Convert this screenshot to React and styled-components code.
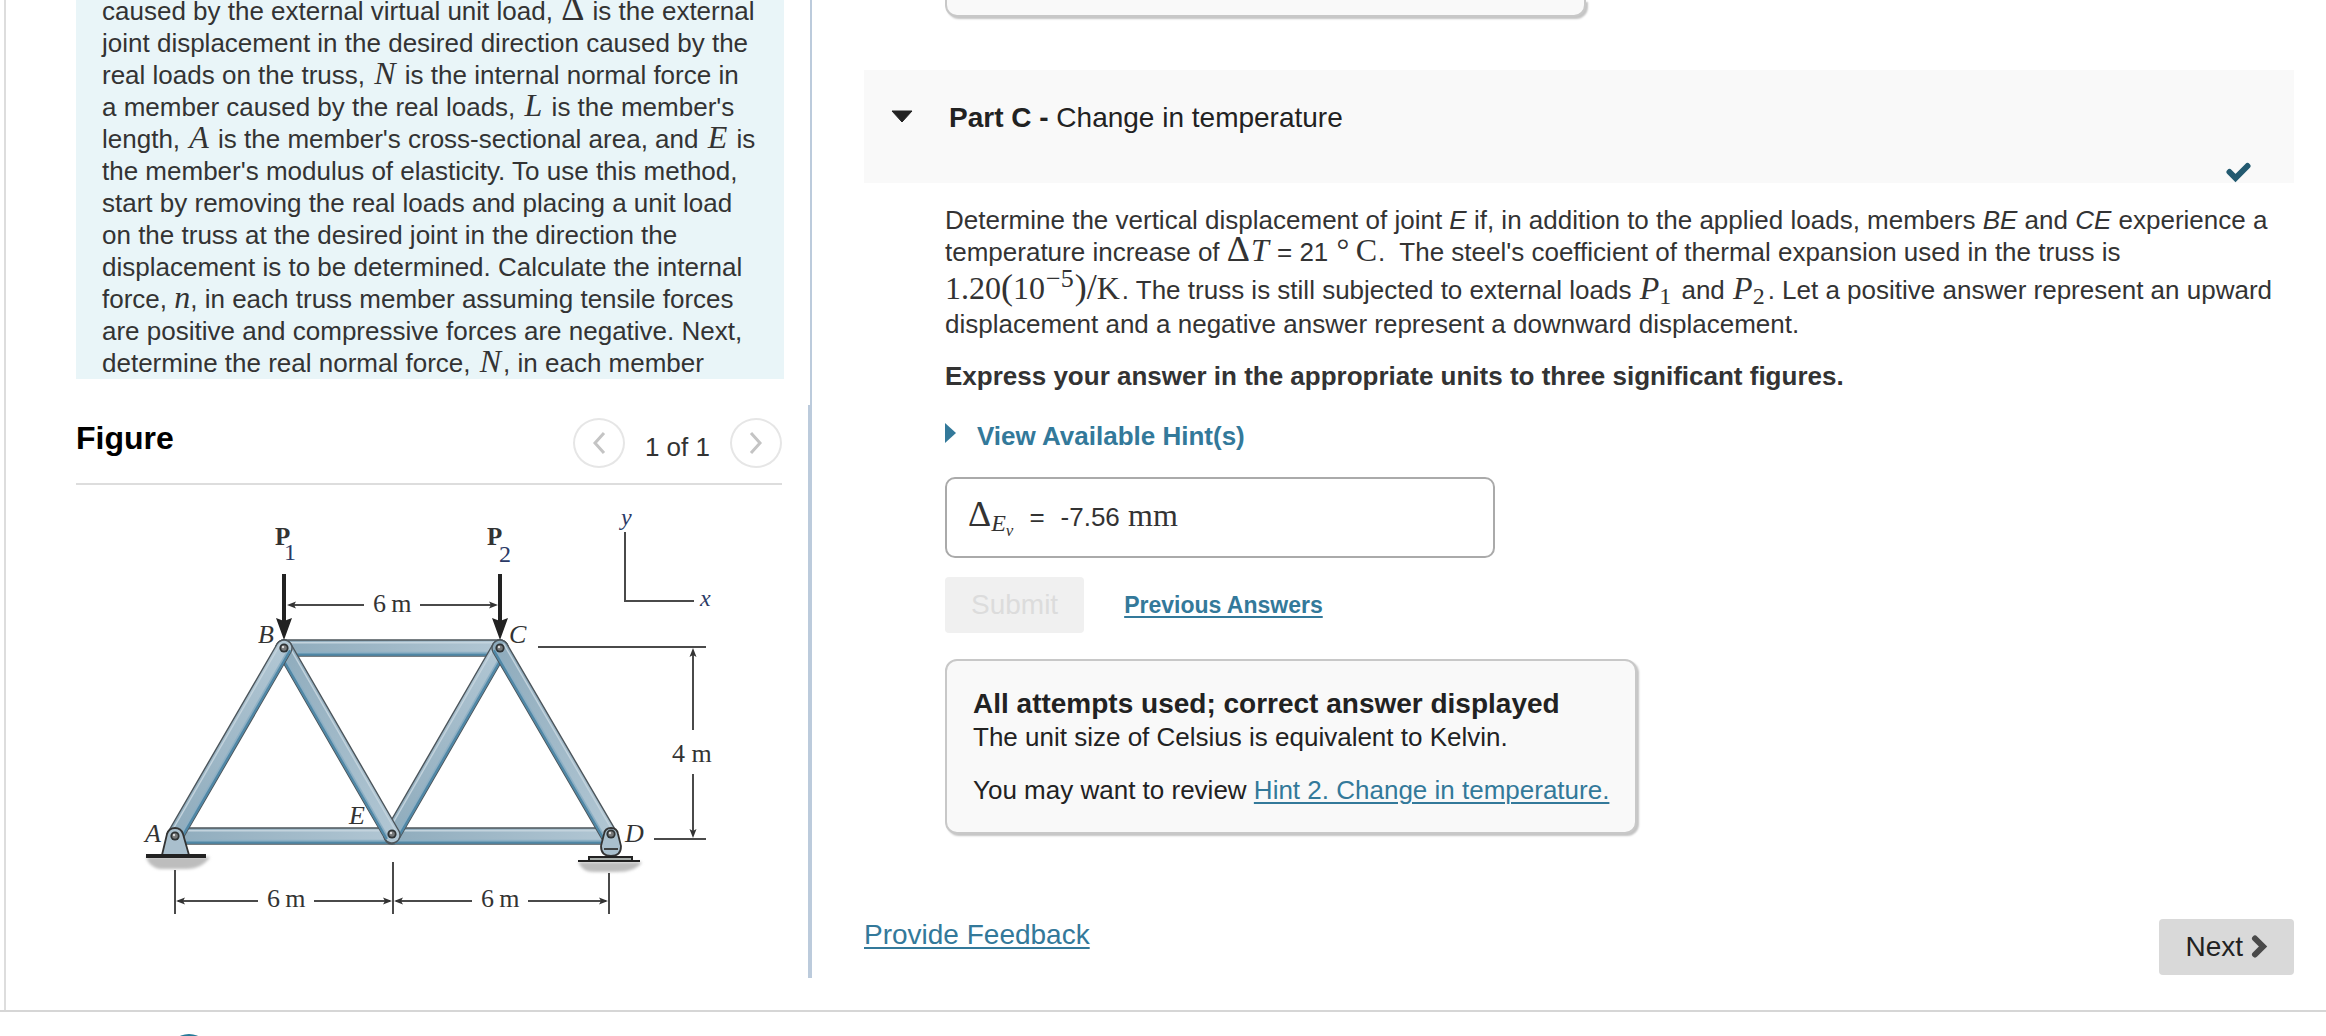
import styled, { createGlobalStyle } from 'styled-components'

const GlobalStyle = createGlobalStyle`
  * {
    box-sizing: border-box;
  }
  body {
    margin: 0;
    background: #fff;
    color: #333;
    font-family: 'Liberation Sans', Arial, sans-serif;
    font-size: 26px;
    line-height: 32px;
  }
  h2, h3, p {
    margin: 0;
  }
  button {
    font-family: inherit;
  }
`

const Shell = styled.div`
  display: flex;
  margin-left: 4px;
  border-left: 2px solid #ddd;
`

const Sidebar = styled.aside`
  flex: 0 1 35%;
  max-width: 806px;
`

const IntroSection = styled.section`
  padding: 0 26px 26px 70px;
  border-right: 2px solid #bccbdc;
`

const IntroPanel = styled.div`
  display: flex;
  flex-direction: column;
  justify-content: flex-end;
  height: 379px;
  padding: 0 24px 0 26px;
  overflow: hidden;
  background: #e9f5f8;
`

const FigureSection = styled.section`
  padding: 13px 26px 0 70px;
  border-right: 4px solid #bccbdc;
`

const FigureHeader = styled.div`
  display: flex;
  justify-content: space-between;
  padding-bottom: 15px;
  border-bottom: 2px solid #ddd;
`

const FigureTitle = styled.h2`
  color: #000;
  font-size: 32px;
  line-height: 40px;
`

const Pager = styled.div`
  display: flex;
  align-items: center;
  gap: 20px;
`

const PageCount = styled.span`
  padding-top: 8px;
`

const PagerButton = styled.button`
  display: flex;
  align-items: center;
  justify-content: center;
  width: 52px;
  height: 50px;
  padding: 0;
  border: 2px solid #e6e6e6;
  border-radius: 50%;
  background: #fff;
`

const Drawing = styled.svg`
  display: block;
  width: 100%;
  height: auto;
`

const Main = styled.main`
  flex: 1;
  min-width: 0;
  padding: 0 32px 35px 52px;
`

const Card = styled.div`
  border: 2px solid #c8c8c8;
  border-radius: 12px;
  background: #f9f9f9;
  box-shadow: 2px 2px 2px #c4c4c4;
  color: #222;
`

const PreviousCard = styled(Card)`
  max-width: 641px;
  height: 17px;
  margin-left: 81px;
  border-top: 0;
  border-radius: 0 0 12px 12px;
`

const PartHeader = styled.header`
  display: flex;
  align-items: flex-start;
  height: 113px;
  margin-top: 53px;
  padding: 32px 43px 0 27px;
  background: #f9f9f9;
`

const Toggle = styled.button`
  display: flex;
  align-items: center;
  height: 30px;
  padding: 0;
  border: 0;
  background: none;
`

const PartTitle = styled.h3`
  flex: 1;
  margin-left: 36px;
  color: #222;
  font-size: 28px;
  font-weight: 400;
`

const CheckMark = styled.svg`
  align-self: flex-end;
`

const PartBody = styled.div`
  padding: 21px 18px 0 81px;
`

const Instruction = styled.p`
  margin-top: 20px;
  font-weight: 700;
`

const HintToggle = styled.button`
  display: flex;
  gap: 20px;
  margin-top: 28px;
  padding: 0;
  border: 0;
  background: none;
  color: #33799a;
  font-size: 26px;
  font-weight: 700;
  line-height: 32px;
`

const Formula = styled.span`
  margin: 0 ${({ $gap }) => $gap || 0}px;
  font-family: 'Liberation Serif', 'Times New Roman', serif;
  font-size: 32px;
  line-height: 28px;
`

const Var = styled(Formula)`
  font-style: italic;
`

const Delta = styled(Formula)`
  font-size: 36px;
  line-height: 24px;
`

const TallFormula = styled(Formula)`
  display: inline-block;
  margin-right: 2px;
  line-height: 40px;
`

const Bracket = styled.span`
  font-size: 36px;
  line-height: 0;
`

const Sup = styled.sup`
  margin: 0 1px;
  font-size: 26px;
  line-height: 0;
  vertical-align: 12px;
`

const Sub = styled.sub`
  margin-right: 2px;
  font-size: 24px;
  font-style: ${({ $italic }) => ($italic ? 'italic' : 'normal')};
  line-height: 0;
  vertical-align: -5px;
`

const SmallSub = styled(Sub)`
  margin-right: 0;
  font-size: 17px;
`

const AnswerBox = styled.div`
  display: flex;
  align-items: baseline;
  max-width: 550px;
  height: 81px;
  margin-top: 25px;
  padding: 22px 20px;
  border: 2px solid #aaa;
  border-radius: 10px;
`

const Equals = styled.span`
  margin: 0 16px 0 13px;
`

const Actions = styled.div`
  display: flex;
  align-items: center;
  gap: 40px;
  margin-top: 19px;
`

const Button = styled.button`
  display: flex;
  align-items: center;
  gap: 8px;
  height: 56px;
  padding: 0 26px;
  border: 0;
  border-radius: 4px;
  background: #d9d9d9;
  color: #222;
  font-size: 28px;
  line-height: 32px;

  &:disabled {
    background: #f0f0f0;
    color: #dcdcdc;
  }
`

const Link = styled.a`
  color: #33799a;
  text-decoration: underline;
  text-decoration-thickness: 2px;
  text-underline-offset: 3px;
`

const AnswersLink = styled(Link)`
  font-size: 23px;
  font-weight: 700;
`

const FeedbackLink = styled(Link)`
  font-size: 28px;
`

const FeedbackCard = styled(Card)`
  max-width: 692px;
  margin-top: 26px;
  padding: 26px 20px 26px 26px;
`

const FeedbackTitle = styled.h3`
  font-size: 28px;
  line-height: 34px;
`

const Review = styled.p`
  margin-top: 21px;
`

const PageActions = styled.div`
  display: flex;
  align-items: flex-start;
  justify-content: space-between;
  margin-top: 85px;
`

const Footer = styled.footer`
  height: 26px;
  padding: 22px 168px 0;
  overflow: hidden;
  border-top: 2px solid #d6d6d6;
`

const Badge = styled.div`
  width: 42px;
  height: 42px;
  border-radius: 50%;
  background: #287a99;
`

// a beam is drawn along its own x axis, then turned into place
const Member = ({ x1, y1, x2, y2 }) => {
  const length = Math.hypot(x2 - x1, y2 - y1)
  const angle = (Math.atan2(y2 - y1, x2 - x1) * 180) / Math.PI
  return (
    <g transform={`translate(${x1} ${y1}) rotate(${angle})`}>
      <rect x="-8" y="-8" width={length + 16} height="16" rx="8" fill="url(#steel)" stroke="#4c555b" strokeWidth="1.4" />
      <path d={`M-2 -5.2H${length + 2}`} stroke="#c3d3dd" strokeWidth="1.4" />
      <path d={`M0 4.6H${length}`} stroke="#8cafc4" strokeWidth="1.6" />
      <path d={`M-1 6.6H${length + 1}`} stroke="#4f87a6" strokeWidth="2.4" />
    </g>
  )
}

const Pin = ({ x, y }) => (
  <g>
    <circle cx={x} cy={y} r="4.6" fill="#2f3335" />
    <circle cx={x} cy={y} r="2.8" fill="#77797a" />
    <circle cx={x - 1} cy={y - 1} r="1.2" fill="#ddd" />
  </g>
)

const Load = ({ x }) => (
  <g fill="#222">
    <rect x={x - 2} y="574" width="4" height="48" />
    <path d={`M${x - 8} 618L${x} 621L${x + 8} 618L${x} 640Z`} />
  </g>
)

const Tip = ({ x, y, turn }) => (
  <path d="M0 0L-9 -3.5L-7 0L-9 3.5Z" fill="#333" transform={`translate(${x} ${y}) rotate(${turn})`} />
)

const Truss = () => (
  <Drawing viewBox="76 485 706 493" role="img" aria-label="Truss">
    <defs>
      <linearGradient id="steel" x1="0" x2="1" y1="0" y2="0">
        <stop offset="0" stopColor="#8eabbc" />
        <stop offset="1" stopColor="#b2c7d4" />
      </linearGradient>
      <filter id="soft" x="-10%" y="-40%" width="120%" height="180%">
        <feGaussianBlur stdDeviation="1.5" />
      </filter>
    </defs>

    <g fill="#bdbdbd" filter="url(#soft)">
      <path d="M146 857H210Q202 869 186 869H160Q149 867 146 857Z" />
      <path d="M578 862H642Q636 872 616 872H594Q582 872 578 862Z" />
    </g>

    <Member x1={284} y1={648} x2={500} y2={648} />
    <Member x1={175} y1={836} x2={392} y2={836} />
    <Member x1={392} y1={836} x2={606} y2={836} />
    <Member x1={392} y1={835} x2={500} y2={648} />
    <Member x1={284} y1={648} x2={392} y2={835} />
    <Member x1={175} y1={836} x2={284} y2={648} />
    <Member x1={500} y1={648} x2={609} y2={835} />

    <g fill="#a9bfcd" stroke="#333" strokeWidth="1.8">
      <path d="M162 855L167 834Q169 828 175 828Q181 828 183 834L189 855Z" />
      <path d="M604 834Q605 828 611 828Q617 828 618 834L621 846Q621 856 611 856Q601 856 601 846Z" />
      <path d="M604 849H618" />
    </g>
    <rect x="146" y="854" width="60" height="4" fill="#222" />
    <rect x="589" y="857" width="43" height="4" fill="#a9afab" stroke="#222" strokeWidth="2" />
    <rect x="578" y="860" width="62" height="2" fill="#222" />
    <Pin x={284} y={648} />
    <Pin x={500} y={648} />
    <Pin x={175} y={836} />
    <Pin x={392} y={834} />
    <Pin x={611} y={834} />
    <Load x={284} />
    <Load x={500} />

    <g stroke="#4a4a4a" strokeWidth="2" fill="none">
      <path d="M290 605H364M420 605H494" />
      <path d="M175 870V914M393 862V914M609 873V914" />
      <path d="M178 901H258M314 901H390M396 901H472M528 901H606" />
      <path d="M538 647H706M654 839H706M693 652V730M693 774V834" />
      <path d="M625 532V601H694" />
    </g>
    <Tip x={287} y={605} turn={180} />
    <Tip x={498} y={605} turn={0} />
    <Tip x={176} y={901} turn={180} />
    <Tip x={392} y={901} turn={0} />
    <Tip x={394} y={901} turn={180} />
    <Tip x={608} y={901} turn={0} />
    <Tip x={693} y={648} turn={-90} />
    <Tip x={693} y={838} turn={90} />

    <g fontFamily="'Liberation Serif', serif" fontSize="26" fill="#333">
      <g fontWeight="700" fontSize="25">
        <text x="275" y="545">P</text>
        <text x="487" y="545">P</text>
      </g>
      <g fill="#2b3a66" fontSize="24">
        <text x="284" y="560">1</text>
        <text x="499" y="562">2</text>
        <text x="621" y="525" fontStyle="italic">y</text>
        <text x="700" y="606" fontStyle="italic">x</text>
      </g>
      <text x="373" y="612">6&#8201;m</text>
      <text x="267" y="907">6&#8201;m</text>
      <text x="481" y="907">6&#8201;m</text>
      <text x="672" y="762">4 m</text>
      <g fontStyle="italic">
        <text x="145" y="842">A</text>
        <text x="258" y="643">B</text>
        <text x="509" y="643">C</text>
        <text x="625" y="842">D</text>
        <text x="349" y="824">E</text>
      </g>
    </g>
  </Drawing>
)

const App = () => {
  return (
    <>
      <GlobalStyle />
      <Shell>
        <Sidebar>
          <IntroSection>
            <IntroPanel>
              <p>
                caused by the external virtual unit load, <Delta $gap={1}>Δ</Delta>{' '}
                is the external joint displacement in the desired direction
                caused by the real loads on the truss, <Var $gap={2}>N</Var> is
                the internal normal force in a member caused by the real loads,{' '}
                <Var $gap={2}>L</Var> is the member's length,{' '}
                <Var $gap={2}>A</Var> is the member's cross-sectional area, and{' '}
                <Var $gap={2}>E</Var> is the member's modulus of elasticity. To
                use this method, start by removing the real loads and placing a
                unit load on the truss at the desired joint in the direction
                the displacement is to be determined. Calculate the internal
                force, <Var>n</Var>, in each truss member assuming tensile
                forces are positive and compressive forces are negative. Next,
                determine the real normal force, <Var $gap={2}>N</Var>, in each
                member
              </p>
            </IntroPanel>
          </IntroSection>
          <FigureSection>
            <FigureHeader>
              <FigureTitle>Figure</FigureTitle>
              <Pager>
                <PagerButton type="button" aria-label="Previous figure">
                  <svg width="14" height="24" viewBox="0 0 14 24" fill="none" stroke="#c4c4c4" strokeWidth="3">
                    <path d="M12 2L3 12L12 22" />
                  </svg>
                </PagerButton>
                <PageCount>1 of 1</PageCount>
                <PagerButton type="button" aria-label="Next figure">
                  <svg width="14" height="24" viewBox="0 0 14 24" fill="none" stroke="#c4c4c4" strokeWidth="3">
                    <path d="M2 2L11 12L2 22" />
                  </svg>
                </PagerButton>
              </Pager>
            </FigureHeader>
            <Truss />
          </FigureSection>
        </Sidebar>

        <Main>
          <PreviousCard />
          <PartHeader>
            <Toggle type="button" aria-label="Collapse Part C">
              <svg width="22" height="14" viewBox="0 0 22 14">
                <path d="M1 1H21L11 12Z" fill="#222" stroke="#222" strokeLinejoin="round" />
              </svg>
            </Toggle>
            <PartTitle>
              <b>Part C -</b> Change in temperature
            </PartTitle>
            <CheckMark width="25" height="21" viewBox="0 0 25 21" fill="none" stroke="#235a70" strokeWidth="6">
              <path d="M3.5 10L9.5 16L21.5 4" strokeLinecap="round" />
            </CheckMark>
          </PartHeader>

          <PartBody>
            <p>
              Determine the vertical displacement of joint <i>E</i> if, in
              addition to the applied loads, members <i>BE</i> and <i>CE</i>{' '}
              experience a temperature increase of <Delta>Δ</Delta>
              <Var $gap={1}>T</Var> = 21 <Formula $gap={1}>°&#8201;C</Formula>.&nbsp;
              The steel's coefficient of thermal expansion used in the truss is{' '}
              <TallFormula>
                1.20<Bracket>(</Bracket>10<Sup>−5</Sup>
                <Bracket>)/</Bracket>K
              </TallFormula>
              . The truss is still subjected to external loads{' '}
              <Var $gap={1}>
                P<Sub>1</Sub>
              </Var>{' '}
              and{' '}
              <Var $gap={1}>
                P<Sub>2</Sub>
              </Var>
              . Let a positive answer represent an upward displacement and a
              negative answer represent a downward displacement.
            </p>
            <Instruction>
              Express your answer in the appropriate units to three significant
              figures.
            </Instruction>
            <HintToggle type="button">
              <svg width="12" height="26" viewBox="0 0 12 26">
                <path d="M0 3L11 13L0 23Z" fill="#33799a" />
              </svg>
              View Available Hint(s)
            </HintToggle>

            <AnswerBox>
              <Delta $gap={1}>
                Δ
                <Sub $italic>
                  E<SmallSub $italic>v</SmallSub>
                </Sub>
              </Delta>
              <Equals>=</Equals>
              <span>
                -7.56 <Formula $gap={1}>mm</Formula>
              </span>
            </AnswerBox>

            <Actions>
              <Button type="submit" disabled>
                Submit
              </Button>
              <AnswersLink href="#answers">Previous Answers</AnswersLink>
            </Actions>

            <FeedbackCard>
              <FeedbackTitle>
                All attempts used; correct answer displayed
              </FeedbackTitle>
              <p>The unit size of Celsius is equivalent to Kelvin.</p>
              <Review>
                You may want to review{' '}
                <Link href="#hint2">Hint 2. Change in temperature.</Link>
              </Review>
            </FeedbackCard>
          </PartBody>

          <PageActions>
            <FeedbackLink href="#feedback">Provide Feedback</FeedbackLink>
            <Button type="button">
              Next
              <svg width="17" height="26" viewBox="0 0 17 26" fill="none" stroke="#4a4a4a" strokeWidth="6">
                <path d="M4 4.5L12 12.5L4 20.5" strokeLinecap="round" />
              </svg>
            </Button>
          </PageActions>
        </Main>
      </Shell>
      <Footer>
        <Badge />
      </Footer>
    </>
  )
}

export default App
